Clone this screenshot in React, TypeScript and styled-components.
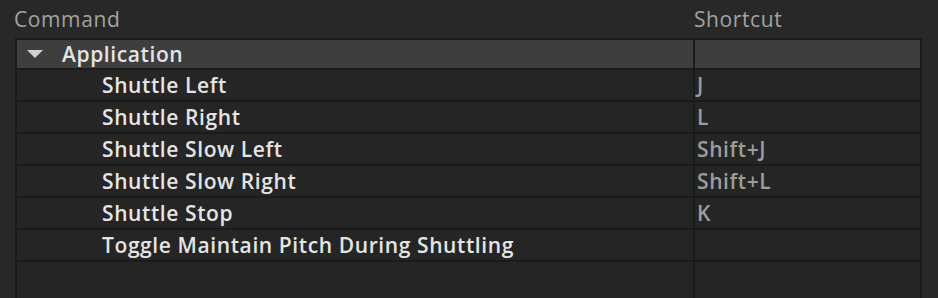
import React from 'react';
import styled, { createGlobalStyle } from 'styled-components';

const GlobalStyle = createGlobalStyle`
  html, body {
    margin: 0;
    padding: 0;
    background: #282828;
    height: 100%;
  }
  #root {
    height: 100%;
  }
`;

const LINE = '#1b1b1b';
const COL_WIDTH = 678;

interface Command {
  name: string;
  shortcut?: string;
}

const commands: Command[] = [
  { name: 'Shuttle Left', shortcut: 'J' },
  { name: 'Shuttle Right', shortcut: 'L' },
  { name: 'Shuttle Slow Left', shortcut: 'Shift+J' },
  { name: 'Shuttle Slow Right', shortcut: 'Shift+L' },
  { name: 'Shuttle Stop', shortcut: 'K' },
  { name: 'Toggle Maintain Pitch During Shuttling' },
];

const Panel = styled.div`
  display: flex;
  flex-direction: column;
  height: 298px;
  width: 938px;
  overflow: hidden;
  font-family: 'Open Sans', 'Liberation Sans', sans-serif;
  font-size: 21px;
`;

const HeaderBar = styled.div`
  display: grid;
  grid-template-columns: 680px 1fr;
  height: 38px;
  align-items: center;
  color: #a3a3a3;
  line-height: 38px;
  padding-left: 14px;
  box-sizing: border-box;
  letter-spacing: 0.6px;
`;

const HeaderLabel = styled.span`
  white-space: nowrap;
`;

const Table = styled.div`
  flex: 1;
  display: flex;
  flex-direction: column;
  margin-left: 15px;
  width: 907px;
  box-sizing: border-box;
  border: 2px solid ${LINE};
  border-bottom: none;
  background: #252525;
`;

const Row = styled.div<{ $group?: boolean; $fill?: boolean }>`
  display: grid;
  grid-template-columns: ${COL_WIDTH}px 1fr;
  height: ${(p) => (p.$fill ? 'auto' : p.$group ? '28px' : '30px')};
  flex: ${(p) => (p.$fill ? 1 : 'none')};
  background: ${(p) => (p.$group ? '#3e3e3e' : '#252525')};
  border-bottom: ${(p) => (p.$fill ? 'none' : `2px solid ${LINE}`)};
  font-weight: 600;
  letter-spacing: 0.6px;
`;

const NameCell = styled.div<{ $indent: number }>`
  display: flex;
  align-items: center;
  padding-left: ${(p) => p.$indent}px;
  border-right: 2px solid ${LINE};
  color: #e4e4e4;
  white-space: nowrap;
`;

const KeyCell = styled.div`
  display: flex;
  align-items: center;
  padding-left: 2px;
  color: #9c9c9c;
`;

const Disclosure = styled.svg`
  width: 16px;
  height: 8px;
  margin-right: 19px;
  flex: none;
`;

export default function App() {
  return (
    <>
      <GlobalStyle />
      <Panel>
        <HeaderBar>
          <HeaderLabel>Command</HeaderLabel>
          <HeaderLabel>Shortcut</HeaderLabel>
        </HeaderBar>
        <Table>
          <Row $group>
            <NameCell $indent={10}>
              <Disclosure viewBox="0 0 16 8">
                <path d="M0 0 H16 L8 8 Z" fill="#d2d2d2" />
              </Disclosure>
              Application
            </NameCell>
            <KeyCell />
          </Row>
          {commands.map((c) => (
            <Row key={c.name}>
              <NameCell $indent={85}>{c.name}</NameCell>
              <KeyCell>{c.shortcut}</KeyCell>
            </Row>
          ))}
          <Row $fill>
            <NameCell $indent={85} />
            <KeyCell />
          </Row>
        </Table>
      </Panel>
    </>
  );
}
